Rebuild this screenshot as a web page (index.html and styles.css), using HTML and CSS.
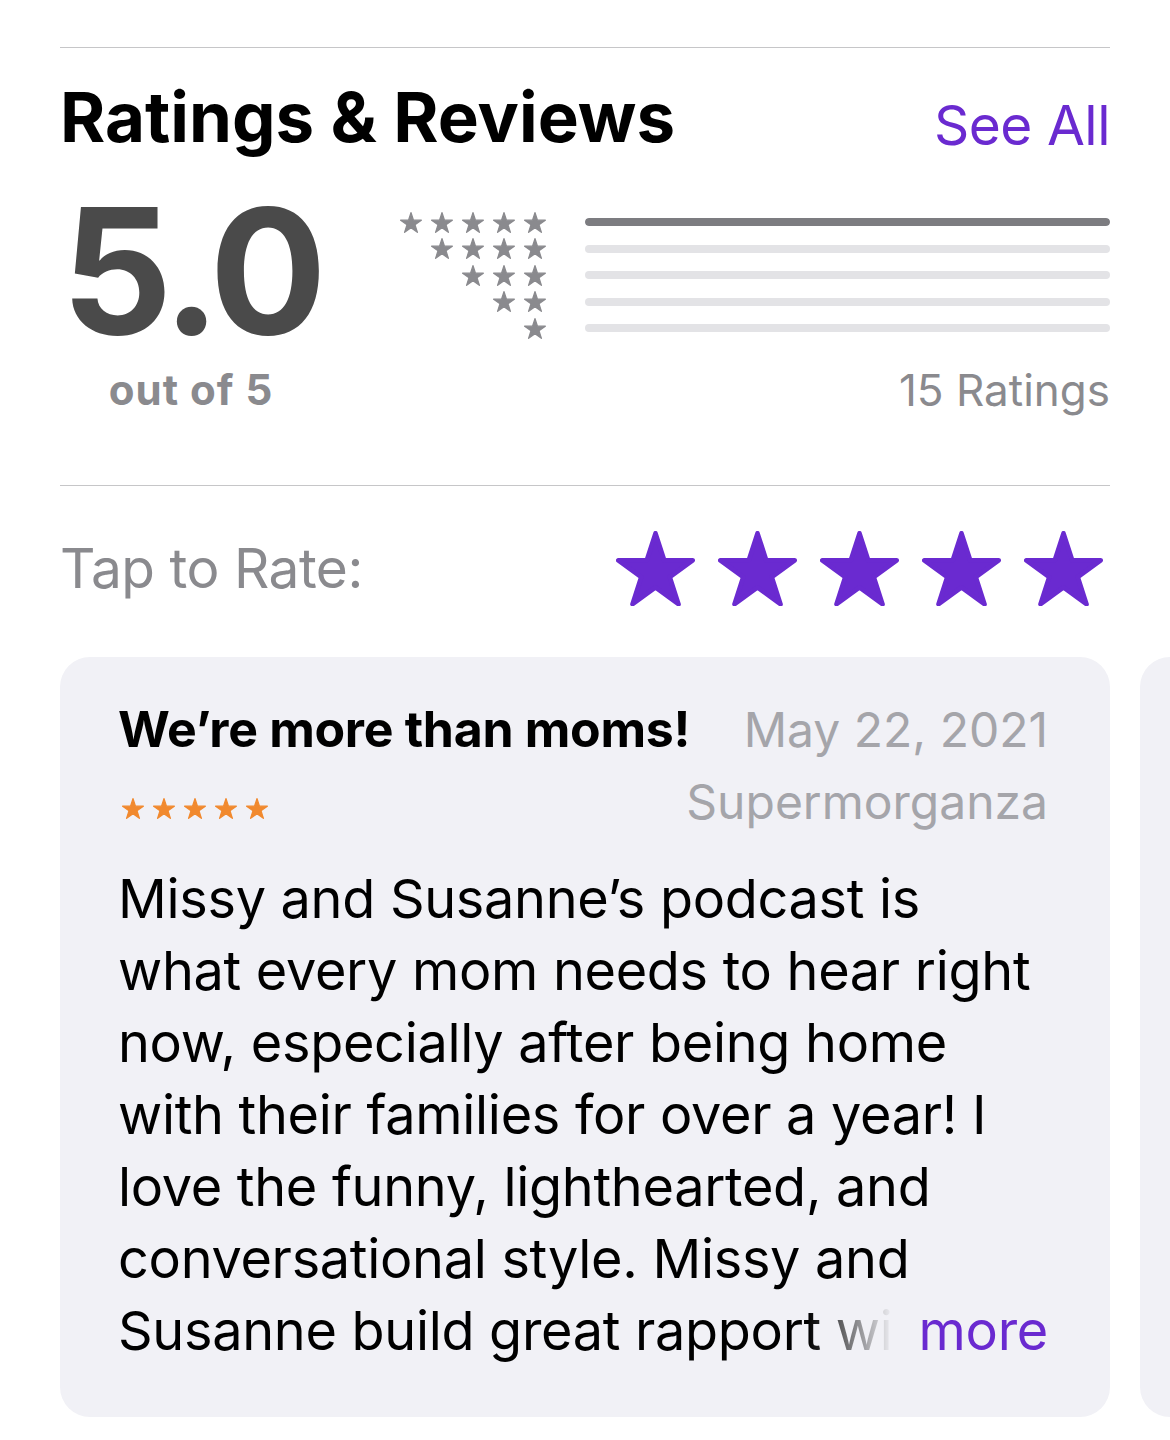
FILE: index.html
```html
<!DOCTYPE html>
<html lang="en">
<head>
    <meta charset="UTF-8">
    <meta name="viewport" content="width=device-width, initial-scale=1.0">
    <title>Ratings &amp; Reviews</title>
    <link rel="stylesheet" href="styles.css">
</head>
<body>
    <svg class="sprite" xmlns="http://www.w3.org/2000/svg">
        <symbol id="star" viewBox="-0.5 -3 101 96.5">
            <polygon points="50,0 61.23,34.55 97.55,34.55 68.17,55.9 79.39,90.45 50,69.1 20.61,90.45 31.83,55.9 2.45,34.55 38.77,34.55"
                     fill="currentColor" stroke="currentColor" stroke-width="6" stroke-linejoin="round"/>
        </symbol>
    </svg>

    <div class="page">
        <hr class="rule">

        <div class="section-head">
            <h2>Ratings &amp; Reviews</h2>
            <a class="link" href="#">See All</a>
        </div>

        <div class="summary">
            <div class="score">
                <div class="score-value">5.0</div>
                <div class="score-label">out of 5</div>
            </div>
            <div class="histogram">
                <div class="hist-row">
                    <div class="hist-stars">
                        <svg class="star-sm"><use href="#star"/></svg>
                        <svg class="star-sm"><use href="#star"/></svg>
                        <svg class="star-sm"><use href="#star"/></svg>
                        <svg class="star-sm"><use href="#star"/></svg>
                        <svg class="star-sm"><use href="#star"/></svg>
                    </div>
                    <div class="bar"><div class="bar-fill" style="width: 100%"></div></div>
                </div>
                <div class="hist-row">
                    <div class="hist-stars">
                        <svg class="star-sm"><use href="#star"/></svg>
                        <svg class="star-sm"><use href="#star"/></svg>
                        <svg class="star-sm"><use href="#star"/></svg>
                        <svg class="star-sm"><use href="#star"/></svg>
                    </div>
                    <div class="bar"><div class="bar-fill" style="width: 0%"></div></div>
                </div>
                <div class="hist-row">
                    <div class="hist-stars">
                        <svg class="star-sm"><use href="#star"/></svg>
                        <svg class="star-sm"><use href="#star"/></svg>
                        <svg class="star-sm"><use href="#star"/></svg>
                    </div>
                    <div class="bar"><div class="bar-fill" style="width: 0%"></div></div>
                </div>
                <div class="hist-row">
                    <div class="hist-stars">
                        <svg class="star-sm"><use href="#star"/></svg>
                        <svg class="star-sm"><use href="#star"/></svg>
                    </div>
                    <div class="bar"><div class="bar-fill" style="width: 0%"></div></div>
                </div>
                <div class="hist-row">
                    <div class="hist-stars">
                        <svg class="star-sm"><use href="#star"/></svg>
                    </div>
                    <div class="bar"><div class="bar-fill" style="width: 0%"></div></div>
                </div>
                <div class="count">15 Ratings</div>
            </div>
        </div>

        <hr class="rule">

        <div class="tap-rate">
            <span class="tap-label">Tap to Rate:</span>
            <div class="rate-stars">
                <svg class="star-lg"><use href="#star"/></svg>
                <svg class="star-lg"><use href="#star"/></svg>
                <svg class="star-lg"><use href="#star"/></svg>
                <svg class="star-lg"><use href="#star"/></svg>
                <svg class="star-lg"><use href="#star"/></svg>
            </div>
        </div>

        <div class="reviews">
            <div class="review-card">
                <div class="review-top">
                    <span class="review-title">We’re more than moms!</span>
                    <span class="review-meta">May 22, 2021</span>
                </div>
                <div class="review-sub">
                    <div class="review-stars">
                        <svg class="star-xs"><use href="#star"/></svg>
                        <svg class="star-xs"><use href="#star"/></svg>
                        <svg class="star-xs"><use href="#star"/></svg>
                        <svg class="star-xs"><use href="#star"/></svg>
                        <svg class="star-xs"><use href="#star"/></svg>
                    </div>
                    <span class="review-meta">Supermorganza</span>
                </div>
                <div class="review-body">
                    <span class="line">Missy and Susanne’s podcast is</span>
                    <span class="line">what every mom needs to hear right</span>
                    <span class="line">now, especially after being home</span>
                    <span class="line">with their families for over a year! I</span>
                    <span class="line">love the funny, lighthearted, and</span>
                    <span class="line">conversational style. Missy and</span>
                    <div class="line last-line">
                        <span class="fade">Susanne build great rapport with each other</span>
                        <a class="more" href="#">more</a>
                    </div>
                </div>
            </div>
            <div class="review-card"></div>
        </div>
    </div>
</body>
</html>
```

FILE: styles.css
```css
body {
    margin: 0;
    background-color: #fff;
    font-family: Inter, 'Noto Sans', sans-serif;
    color: #000;
    overflow: hidden;
}
.sprite {
    display: none;
}
.page {
    padding: 47px 60px 0;
}
.rule {
    margin: 0;
    border: none;
    border-top: 1px solid #c6c6c8;
}

/* heading */
.section-head {
    display: flex;
    justify-content: space-between;
    align-items: baseline;
    margin-top: 29px;
}
.section-head h2 {
    margin: 0;
    font-size: 69px;
    line-height: 80px;
    font-weight: 700;
}
.link {
    color: #6a2ad0;
    text-decoration: none;
    font-size: 55px;
    letter-spacing: -0.5px;
    position: relative;
    top: 3px;
}

/* score + histogram */
.summary {
    display: flex;
    margin-top: 27px;
    padding-bottom: 70px;
}
.score {
    width: 262px;
    text-align: center;
}
.score-value {
    font-size: 174px;
    line-height: 170px;
    font-weight: 700;
    color: #4a4a4a;
    letter-spacing: -6px;
    padding-top: 2px;
}
.score-label {
    margin-top: 12px;
    font-size: 42px;
    line-height: 44px;
    font-weight: 700;
    color: #8a8a8e;
    letter-spacing: 1px;
}
.histogram {
    flex: 1;
    margin-left: 64px;
    padding-top: 25px;
}
.hist-row {
    display: flex;
    align-items: center;
    height: 26.5px;
}
.hist-stars {
    width: 160px;
    display: flex;
    justify-content: flex-end;
    gap: 9px;
    color: #8a8a8e;
}
.star-sm {
    width: 22px;
    height: 21px;
}
.bar {
    flex: 1;
    height: 8px;
    margin-left: 39px;
    border-radius: 4px;
    background-color: #e3e3e6;
    overflow: hidden;
}
.bar-fill {
    height: 100%;
    background-color: #7c7c80;
    border-radius: 4px;
}
.count {
    margin-top: 23px;
    text-align: right;
    font-size: 44px;
    line-height: 50px;
    color: #8a8a8e;
}

/* tap to rate */
.tap-rate {
    display: flex;
    justify-content: space-between;
    align-items: center;
    margin-top: 45px;
}
.tap-label {
    font-size: 55px;
    color: #8a8a8e;
    letter-spacing: -0.5px;
}
.rate-stars {
    display: flex;
    gap: 23px;
    margin-right: 7px;
    color: #6a2ad0;
}
.star-lg {
    width: 79px;
    height: 75.5px;
}

/* review carousel */
.reviews {
    display: flex;
    gap: 30px;
    margin-top: 51px;
    margin-right: -60px;
    overflow: hidden;
}
.review-card {
    width: 1050px;
    flex-shrink: 0;
    min-width: 0;
    box-sizing: border-box;
    height: 760px;
    padding: 36px 62px 0 58px;
    background-color: #f1f1f6;
    border-radius: 30px;
    overflow: hidden;
}
.review-top,
.review-sub {
    display: flex;
    justify-content: space-between;
    align-items: baseline;
    line-height: 72px;
}
.review-title {
    font-size: 50px;
    font-weight: 700;
    letter-spacing: -0.3px;
}
.review-meta {
    font-size: 48px;
    color: #a5a5aa;
}
.review-stars {
    display: flex;
    gap: 9px;
    margin-left: 4px;
    color: #f1892e;
}
.star-xs {
    width: 22px;
    height: 21px;
    margin-bottom: 2px;
}
.review-body {
    margin-top: 25px;
    font-size: 54px;
    line-height: 72px;
    letter-spacing: -0.3px;
}
.line {
    display: block;
    white-space: nowrap;
}
.last-line {
    display: flex;
}
.fade {
    width: 782px;
    overflow: hidden;
    -webkit-mask-image: linear-gradient(to right, #000 690px, transparent 775px);
    mask-image: linear-gradient(to right, #000 690px, transparent 775px);
}
.more {
    margin-left: auto;
    color: #6a2ad0;
    text-decoration: none;
}
```
